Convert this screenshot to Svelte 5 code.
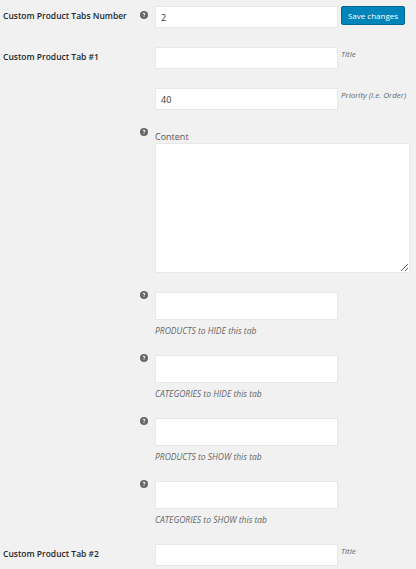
<script>
  const tabFields = [
    { hint: "PRODUCTS to HIDE this tab" },
    { hint: "CATEGORIES to HIDE this tab" },
    { hint: "PRODUCTS to SHOW this tab" },
    { hint: "CATEGORIES to SHOW this tab" }
  ];
</script>

{#snippet help()}
  <svg class="help" viewBox="0 0 16 16" width="8" height="8" aria-hidden="true">
    <circle cx="8" cy="8" r="8" fill="#666" />
    <path d="M5.4 6.2c0-1.6 1.2-2.5 2.7-2.5s2.6.9 2.6 2.2c0 1.9-2 1.9-2 3.4H7.1c0-2.2 1.8-2.2 1.8-3.3 0-.5-.3-.8-.8-.8-.6 0-.9.4-.9 1z" fill="#f1f1f1" />
    <rect x="7.1" y="10.4" width="1.8" height="1.8" fill="#f1f1f1" />
  </svg>
{/snippet}

<div class="form">
  <div class="row">
    <div class="label">Custom Product Tabs Number</div>
    <div class="tip first">{@render help()}</div>
    <div class="field inline">
      <input class="text" type="text" value="2" />
      <button class="save" type="button">Save changes</button>
    </div>
  </div>

  <div class="row">
    <div class="label">Custom Product Tab #1</div>
    <div class="tip"></div>
    <div class="field inline">
      <input class="text" type="text" />
      <span class="note">Title</span>
    </div>
  </div>

  <div class="row">
    <div class="label"></div>
    <div class="tip"></div>
    <div class="field inline">
      <input class="text" type="text" value="40" />
      <span class="note">Priority (I.e. Order)</span>
    </div>
  </div>

  <div class="row">
    <div class="label"></div>
    <div class="tip">{@render help()}</div>
    <div class="field">
      <div class="caption">Content</div>
      <textarea class="content"></textarea>
    </div>
  </div>

  {#each tabFields as item (item.hint)}
    <div class="row">
      <div class="label"></div>
      <div class="tip">{@render help()}</div>
      <div class="field">
        <input class="text tall" type="text" />
        <div class="hint">{item.hint}</div>
      </div>
    </div>
  {/each}

  <div class="row">
    <div class="label">Custom Product Tab #2</div>
    <div class="tip"></div>
    <div class="field inline">
      <input class="text" type="text" />
      <span class="note">Title</span>
    </div>
  </div>
</div>

<style>
  :global(body) {
    margin: 0;
    background: #f1f1f1;
  }

  .form {
    height: 569px;
    overflow: hidden;
    box-sizing: border-box;
    padding-top: 6px;
    display: flex;
    flex-direction: column;
    gap: 19px;
    font-family: "Open Sans", "Liberation Sans", sans-serif;
    font-size: 8.5px;
    color: #444;
    background: #f1f1f1;
  }

  .row {
    display: grid;
    grid-template-columns: 139px 16px 1fr;
  }

  .label {
    padding: 4px 0 0 3px;
    font-weight: 600;
    line-height: 12px;
    color: #23282d;
    white-space: nowrap;
  }

  .tip {
    margin-top: -1px;
    line-height: 0;
  }

  .tip.first {
    margin-top: 5px;
  }

  .help {
    display: block;
    margin-left: 0.5px;
  }

  .field.inline {
    display: flex;
    align-items: flex-start;
  }

  .text {
    display: block;
    box-sizing: border-box;
    width: 183px;
    height: 22px;
    margin: 0;
    padding: 0 5px;
    border: 1px solid #e8e8e8;
    border-radius: 0;
    background: #fff;
    font: inherit;
    font-size: 9px;
    color: #32373c;
    outline: none;
  }

  .text.tall {
    height: 28px;
  }

  .note {
    margin: 1px 0 0 3px;
    font-size: 8px;
    font-style: italic;
    line-height: 12px;
    color: #666;
    white-space: nowrap;
  }

  .save {
    width: 64px;
    height: 19px;
    margin-left: 3px;
    padding: 0;
    border: 1px solid #006799;
    border-radius: 2px;
    background: #0085ba;
    font: inherit;
    font-size: 8px;
    line-height: 17px;
    color: #fff;
    white-space: nowrap;
  }

  .caption {
    height: 14px;
    padding-top: 1px;
    box-sizing: border-box;
    line-height: 14px;
    color: #555;
    font-size: 9px;
  }

  .content {
    display: block;
    box-sizing: border-box;
    width: 255px;
    height: 130px;
    margin: 0;
    padding: 4px;
    border: 1px solid #e8e8e8;
    border-radius: 0;
    background: #fff;
    outline: none;
  }

  .hint {
    height: 16px;
    padding-top: 5px;
    box-sizing: border-box;
    line-height: 12px;
    font-style: italic;
    color: #666;
    white-space: nowrap;
  }
</style>
